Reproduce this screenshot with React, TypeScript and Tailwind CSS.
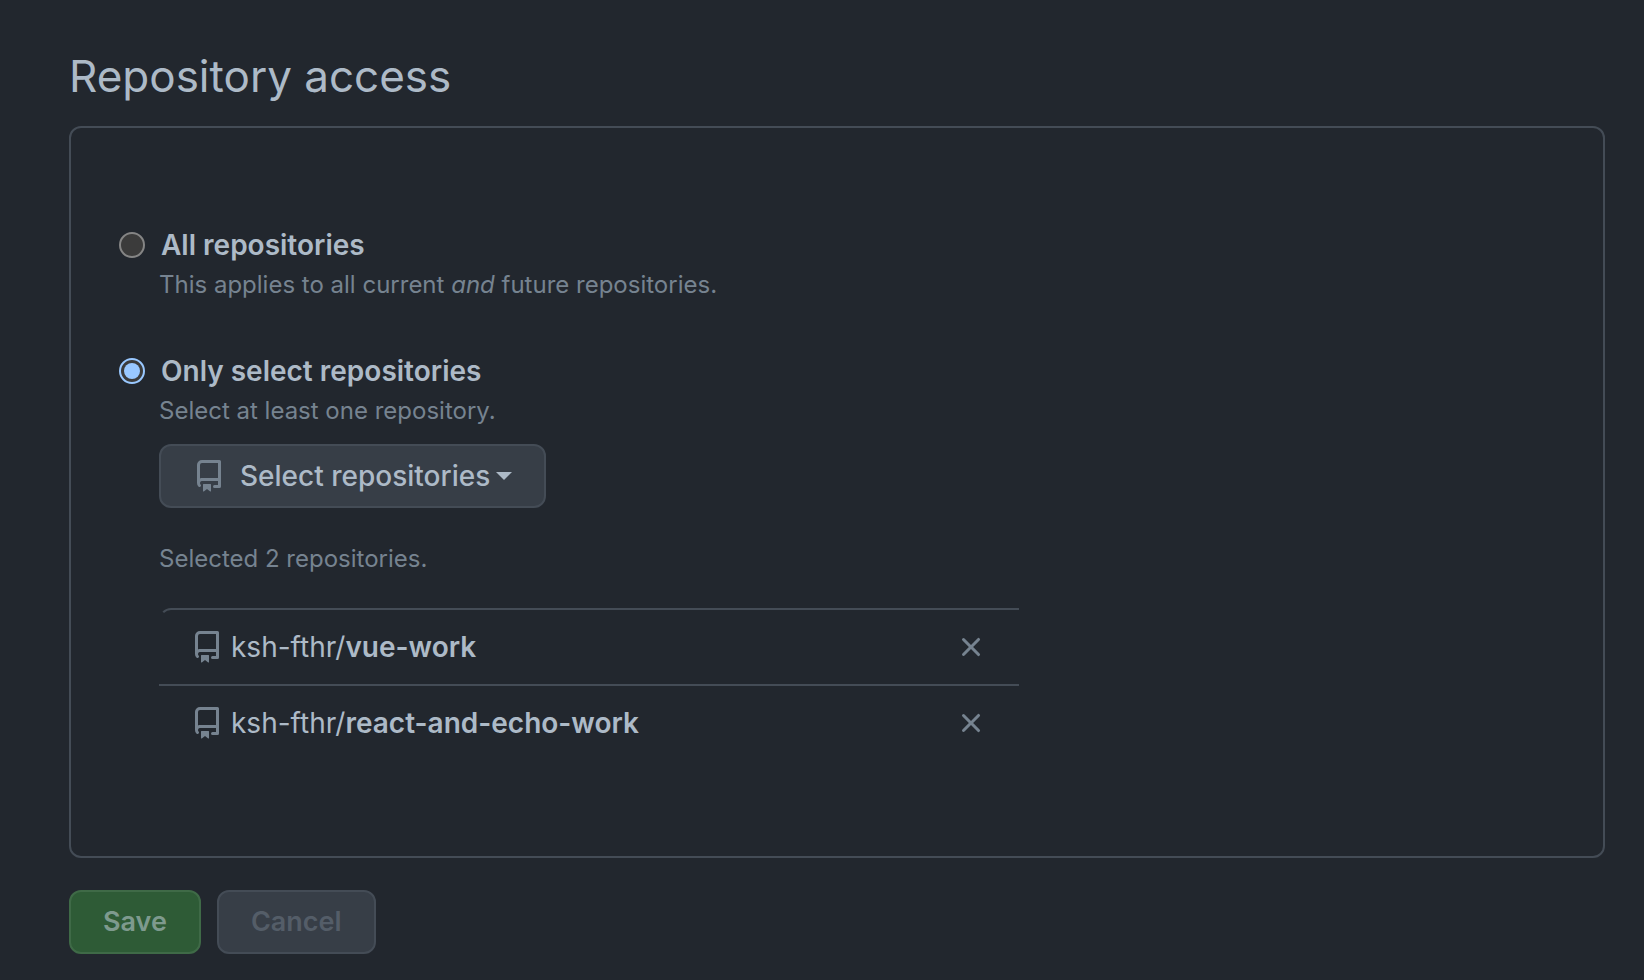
import { useState } from 'react'
import { clsx } from 'clsx'

interface Repository {
  owner: string
  name: string
}

const initialRepositories: Repository[] = [
  { owner: 'ksh-fthr', name: 'vue-work' },
  { owner: 'ksh-fthr', name: 'react-and-echo-work' }
]

function RepoIcon({ className }: { className?: string }) {
  return (
    <svg
      className={clsx('size-8 shrink-0 text-[#768390]', className)}
      viewBox="0 0 16 16"
      fill="currentColor"
      aria-hidden="true"
    >
      <path
        fillRule="evenodd"
        d="M2 2.5A2.5 2.5 0 014.5 0h8.75a.75.75 0 01.75.75v12.5a.75.75 0 01-.75.75h-2.5a.75.75 0 110-1.5h1.75v-2h-8a1 1 0 00-.714 1.7.75.75 0 01-1.072 1.05A2.495 2.495 0 012 11.5v-9zm10.5-1V9h-8c-.356 0-.694.074-1 .208V2.5a1 1 0 011-1h8zM5 12.25v3.25a.25.25 0 00.4.2l1.45-1.087a.25.25 0 01.3 0L8.6 15.7a.25.25 0 00.4-.2v-3.25a.25.25 0 00-.25-.25h-3.5a.25.25 0 00-.25.25z"
      />
    </svg>
  )
}

function CloseIcon() {
  return (
    <svg className="size-8" viewBox="0 0 16 16" fill="currentColor" aria-hidden="true">
      <path
        fillRule="evenodd"
        d="M3.72 3.72a.75.75 0 011.06 0L8 6.94l3.22-3.22a.75.75 0 111.06 1.06L9.06 8l3.22 3.22a.75.75 0 11-1.06 1.06L8 9.06l-3.22 3.22a.75.75 0 01-1.06-1.06L6.94 8 3.72 4.78a.75.75 0 010-1.06z"
      />
    </svg>
  )
}

interface AccessOptionProps {
  id: string
  label: string
  checked: boolean
  onSelect: () => void
  children: React.ReactNode
}

function AccessOption({ id, label, checked, onSelect, children }: AccessOptionProps) {
  return (
    <div>
      <div className="flex items-center gap-4">
        <input
          type="radio"
          id={id}
          name="repository-access"
          checked={checked}
          onChange={onSelect}
          className={clsx(
            'flex size-[26px] shrink-0 appearance-none items-center justify-center rounded-full border-2 bg-[#3b3b3b]',
            'before:size-4 before:rounded-full',
            checked ? 'border-[#99c8ff] before:bg-[#99c8ff]' : 'border-[#858585]'
          )}
        />
        <label htmlFor={id} className="text-[28px] leading-[42px] font-semibold">
          {label}
        </label>
      </div>
      <div className="pl-10">{children}</div>
    </div>
  )
}

export default function App() {
  const [access, setAccess] = useState<'all' | 'selected'>('selected')
  const [repositories, setRepositories] = useState(initialRepositories)

  const removeRepository = (name: string) => {
    setRepositories(repositories.filter((repo) => repo.name !== name))
  }

  return (
    <main className="min-h-screen bg-[#22272e] pt-10 pr-[39px] pb-6 pl-[69px] font-['Inter','Liberation_Sans',sans-serif] text-[#adbac7]">
      <h2 className="mb-[14px] text-[44px] leading-[72px]">Repository access</h2>

      <form onSubmit={(e) => e.preventDefault()}>
        <div className="flex flex-col gap-[46px] rounded-xl border-2 border-[#444c56] px-12 py-24">
          <AccessOption
            id="access-all"
            label="All repositories"
            checked={access === 'all'}
            onSelect={() => setAccess('all')}
          >
            <p className="text-2xl leading-[38px] text-[#768390]">
              This applies to all current <em>and</em> future repositories.
            </p>
          </AccessOption>

          <AccessOption
            id="access-selected"
            label="Only select repositories"
            checked={access === 'selected'}
            onSelect={() => setAccess('selected')}
          >
            <p className="text-2xl leading-[38px] text-[#768390]">
              Select at least one repository.
            </p>

            <button
              type="button"
              className="mt-[14px] flex h-16 items-center rounded-xl border-2 border-[#444c56] bg-[#373e47] px-8 text-[28px] font-medium"
            >
              <RepoIcon className="mr-[15px]" />
              Select repositories
              <span className="ml-1.5 border-x-8 border-t-8 border-x-transparent border-t-[#adbac7]" />
            </button>

            <p className="mt-8 text-2xl leading-[38px] text-[#768390]">
              Selected {repositories.length} repositories.
            </p>

            <ul className="mt-[30px] max-w-[860px]">
              {repositories.map((repo) => (
                <li
                  key={repo.name}
                  className="flex items-center border-t-2 border-t-[#444c56] px-8 py-4 text-[28px] leading-[42px] first:rounded-tl-xl first:border-l-2 first:border-l-transparent first:pl-[30px]"
                >
                  <RepoIcon className="mr-2" />
                  <span>
                    {repo.owner}/<strong className="font-semibold">{repo.name}</strong>
                  </span>
                  <button
                    type="button"
                    aria-label={`Remove ${repo.name}`}
                    onClick={() => removeRepository(repo.name)}
                    className="ml-auto text-[#768390]"
                  >
                    <CloseIcon />
                  </button>
                </li>
              ))}
            </ul>
          </AccessOption>
        </div>

        <div className="mt-8 flex gap-4">
          <button
            type="submit"
            disabled
            className="h-16 rounded-xl border-2 border-[#3f6a47] bg-[#2e5b36] px-8 text-[27px] font-semibold text-[#7e9a8e]"
          >
            Save
          </button>
          <button
            type="button"
            disabled
            className="h-16 rounded-xl border-2 border-[#444c56] bg-[#373e47] px-8 text-[27px] font-semibold text-[#545d68]"
          >
            Cancel
          </button>
        </div>
      </form>
    </main>
  )
}
